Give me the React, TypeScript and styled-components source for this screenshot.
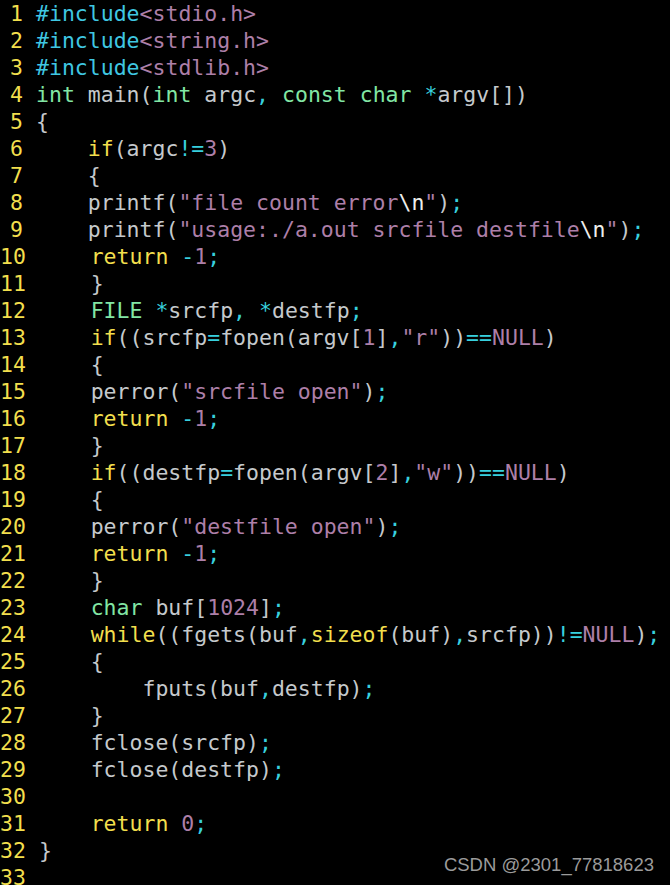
import React from "react";
import styled, { createGlobalStyle } from "styled-components";

const Global = createGlobalStyle`
  html, body {
    margin: 0;
    padding: 0;
    background: #000000;
  }
  #root {
    width: 670px;
    height: 885px;
    overflow: hidden;
  }
`;

const palette = {
  text: "#c5c9cc",
  number: "#f2df4d",
  keyword: "#f2df4d",
  type: "#82e6a4",
  preproc: "#3fc7e2",
  op: "#38d0de",
  literal: "#ad7fa8",
  special: "#eeeeec",
};

type Kind = keyof typeof palette;

const Screen = styled.div`
  position: relative;
  width: 670px;
  height: 885px;
  background: #000000;
  overflow: hidden;
`;

const Editor = styled.div`
  display: flex;
  flex-direction: column;
  font-family: "DejaVu Sans Mono", monospace;
  font-size: 21.5px;
  line-height: 27px;
  white-space: pre;
`;

const Row = styled.div`
  display: flex;
  height: 27px;
`;

const Gutter = styled.span`
  flex: 0 0 36px;
  box-sizing: border-box;
  padding-right: 13px;
  text-align: right;
  color: ${palette.number};
`;

const Code = styled.span`
  flex: 1;
  color: ${palette.text};
`;

const Tok = styled.span<{ $kind: Kind }>`
  color: ${(p) => palette[p.$kind]};
`;

const Watermark = styled.div`
  position: absolute;
  right: 16px;
  bottom: 9px;
  font-family: "Liberation Sans", Arial, sans-serif;
  font-size: 18.5px;
  color: #9b9b9b;
`;

const source = [
  "#include<stdio.h>",
  "#include<string.h>",
  "#include<stdlib.h>",
  "int main(int argc, const char *argv[])",
  "{",
  "    if(argc!=3)",
  "    {",
  '    printf("file count error\\n");',
  '    printf("usage:./a.out srcfile destfile\\n");',
  "    return -1;",
  "    }",
  "    FILE *srcfp, *destfp;",
  '    if((srcfp=fopen(argv[1],"r"))==NULL)',
  "    {",
  '    perror("srcfile open");',
  "    return -1;",
  "    }",
  '    if((destfp=fopen(argv[2],"w"))==NULL)',
  "    {",
  '    perror("destfile open");',
  "    return -1;",
  "    }",
  "    char buf[1024];",
  "    while((fgets(buf,sizeof(buf),srcfp))!=NULL);",
  "    {",
  "        fputs(buf,destfp);",
  "    }",
  "    fclose(srcfp);",
  "    fclose(destfp);",
  "",
  "    return 0;",
  "}",
  "",
];

const keywords = new Set(["if", "return", "while", "sizeof"]);
const types = new Set(["int", "char", "const", "FILE"]);
const literals = new Set(["NULL"]);

type Token = { text: string; kind: Kind };

function tokenize(line: string): Token[] {
  const out: Token[] = [];
  const push = (text: string, kind: Kind) => {
    const last = out[out.length - 1];
    if (last && last.kind === kind) last.text += text;
    else out.push({ text, kind });
  };
  if (line.startsWith("#include")) {
    push("#include", "preproc");
    push(line.slice(8), "literal");
    return out;
  }
  let i = 0;
  while (i < line.length) {
    const c = line[i];
    if (c === '"') {
      let j = i + 1;
      push('"', "literal");
      while (j < line.length && line[j] !== '"') {
        if (line[j] === "\\") {
          push(line.slice(j, j + 2), "special");
          j += 2;
        } else {
          push(line[j], "literal");
          j++;
        }
      }
      push('"', "literal");
      i = j + 1;
    } else if (/[A-Za-z_]/.test(c)) {
      let j = i;
      while (j < line.length && /[A-Za-z0-9_]/.test(line[j])) j++;
      const w = line.slice(i, j);
      push(
        w,
        keywords.has(w)
          ? "keyword"
          : types.has(w)
          ? "type"
          : literals.has(w)
          ? "literal"
          : "text"
      );
      i = j;
    } else if (/[0-9]/.test(c)) {
      let j = i;
      while (j < line.length && /[0-9]/.test(line[j])) j++;
      push(line.slice(i, j), "literal");
      i = j;
    } else if ("*=;,!-".includes(c)) {
      push(c, "op");
      i++;
    } else {
      push(c, "text");
      i++;
    }
  }
  return out;
}

export default function App() {
  return (
    <>
      <Global />
      <Screen>
        <Editor>
          {source.map((line, idx) => (
            <Row key={idx}>
              <Gutter>{idx + 1}</Gutter>
              <Code>
                {tokenize(line).map((t, k) => (
                  <Tok key={k} $kind={t.kind}>
                    {t.text}
                  </Tok>
                ))}
              </Code>
            </Row>
          ))}
        </Editor>
        <Watermark>CSDN @2301_77818623</Watermark>
      </Screen>
    </>
  );
}
